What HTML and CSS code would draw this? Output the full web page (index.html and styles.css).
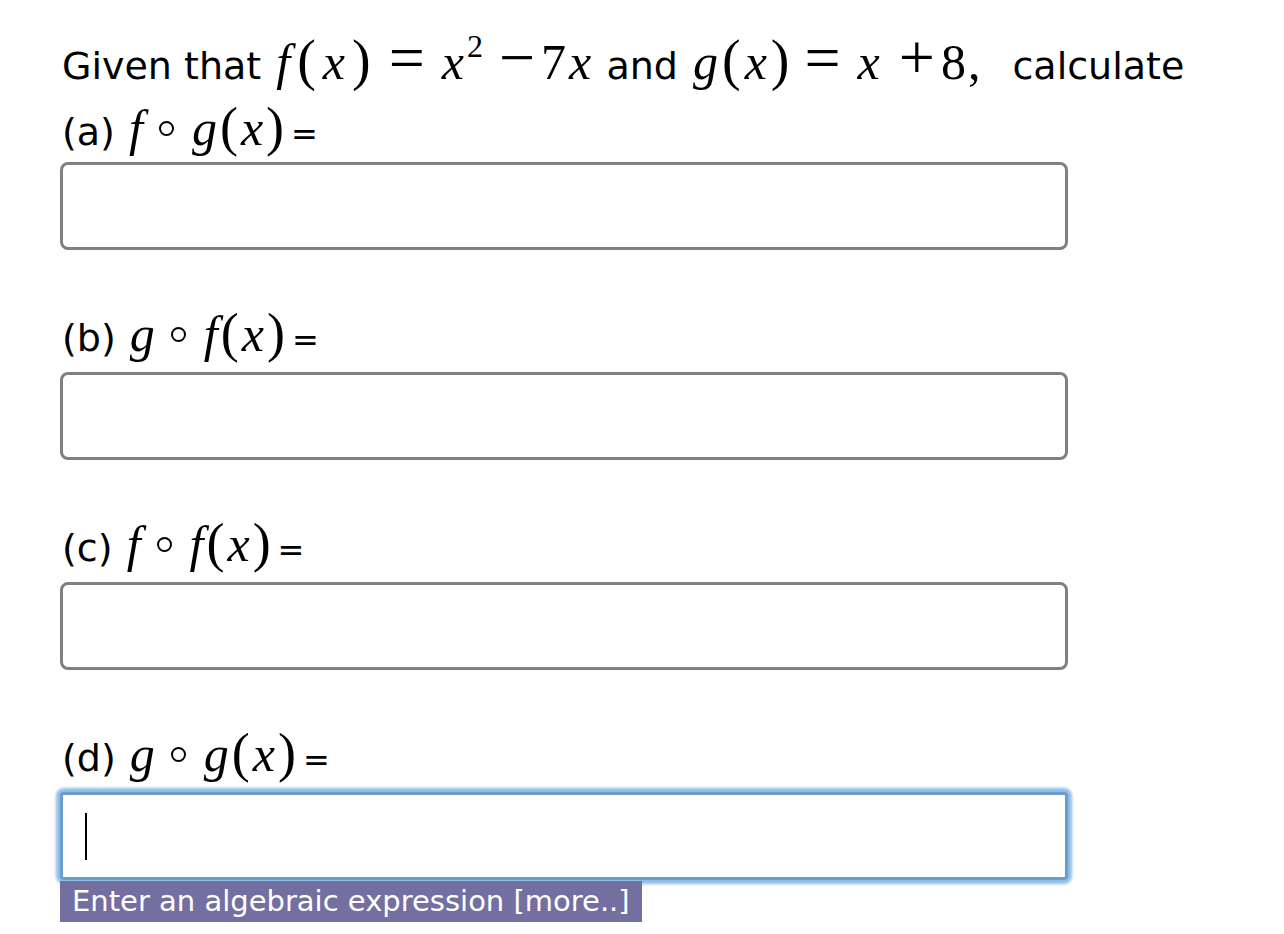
FILE: index.html
```html
<!DOCTYPE html>
<html>
<head>
<meta charset="utf-8">
<link rel="stylesheet" href="styles.css">
</head>
<body>
<div class="problem">
  <div class="line first">Given that <span class="math"><span class="mi">f</span><span class="mo paren">(</span><span class="mi">x</span><span class="mo paren">)</span><span class="mo rel">=</span><span class="mi">x</span><sup class="sup">2</sup><span class="mo bin">−</span><span class="mn">7</span><span class="mi">x</span></span> and <span class="math tight"><span class="mi">g</span><span class="mo paren">(</span><span class="mi">x</span><span class="mo paren">)</span><span class="mo rel">=</span><span class="mi">x</span><span class="mo bin">+</span><span class="mn">8</span><span class="mn comma">,</span></span> calculate</div>
  <div class="line second">(a) <span class="math"><span class="mi">f</span><span class="ring"></span><span class="mi">g</span><span class="mo paren">(</span><span class="mi">x</span><span class="mo paren">)</span></span><span class="eq">=</span></div>
  <div class="answer"></div>

  <div class="line label">(b) <span class="math"><span class="mi">g</span><span class="ring"></span><span class="mi">f</span><span class="mo paren">(</span><span class="mi">x</span><span class="mo paren">)</span></span><span class="eq">=</span></div>
  <div class="answer"></div>

  <div class="line label">(c) <span class="math"><span class="mi">f</span><span class="ring"></span><span class="mi">f</span><span class="mo paren">(</span><span class="mi">x</span><span class="mo paren">)</span></span><span class="eq">=</span></div>
  <div class="answer"></div>

  <div class="line label">(d) <span class="math"><span class="mi">g</span><span class="ring"></span><span class="mi">g</span><span class="mo paren">(</span><span class="mi">x</span><span class="mo paren">)</span></span><span class="eq">=</span></div>
  <div class="answer focused"><span class="caret"></span></div>
  <div class="tip">Enter an algebraic expression [more..]</div>
</div>
</body>
</html>
```
FILE: styles.css
```css
html, body {
  margin: 0;
  padding: 0;
  background: #ffffff;
}
.problem {
  padding: 33px 0 0 62px;
  width: 1006px;
  font-family: "DejaVu Sans", sans-serif;
  font-size: 38px;
  color: #000;
}
.line {
  height: 66px;
  line-height: 66px;
  white-space: nowrap;
}
.line.second {
  height: 63px;
}
.math {
  font-family: "Liberation Serif", serif;
  font-size: 50px;
  line-height: 0;
}
.mi {
  font-style: italic;
  padding: 0 2px;
}
.mn {
  font-style: normal;
}
.mo {
  font-style: normal;
}
.paren {
  font-size: 54px;
  padding: 0 1px;
}
.first .paren {
  font-size: 56px;
  padding: 0 4px;
}
.first .tight .paren {
  padding: 0 1px;
}
.first .mi {
  padding: 0 3px;
}
.rel {
  font-size: 64px;
  margin: 0 14px 0 14px;
}
.bin {
  font-size: 64px;
  margin: 0 6px 0 16px;
}
.sup {
  font-size: 32px;
  vertical-align: 22px;
  line-height: 0;
}
.comma {
  margin-left: 2px;
  margin-right: 20px;
}
.ring {
  display: inline-block;
  box-sizing: border-box;
  width: 15px;
  height: 15px;
  border: 2px solid #000;
  border-radius: 50%;
  margin: 0 16px 0 14px;
  vertical-align: 9px;
}
.eq {
  font-size: 32px;
  margin-left: 6px;
}
.answer {
  box-sizing: border-box;
  height: 88px;
  margin-left: -2px;
  width: 1008px;
  border: 3px solid #808080;
  border-radius: 8px;
  margin-bottom: 55px;
  background: #fff;
}
.label + .answer {
  margin-top: 1px;
}
.answer.focused {
  border-color: #6b9dcf;
  border-radius: 4px;
  box-shadow: 0 0 3px 4px #8fbde8;
  margin-bottom: 0;
  padding: 18px 0 0 22px;
}
.caret {
  display: block;
  width: 2px;
  height: 47px;
  background: #000;
}
.tip {
  display: block;
  width: max-content;
  margin-top: 1px;
  margin-left: -2px;
  background: #7370a1;
  color: #fff;
  font-size: 29px;
  line-height: 41px;
  height: 41px;
  padding: 0 12px 0 12px;
}
```
